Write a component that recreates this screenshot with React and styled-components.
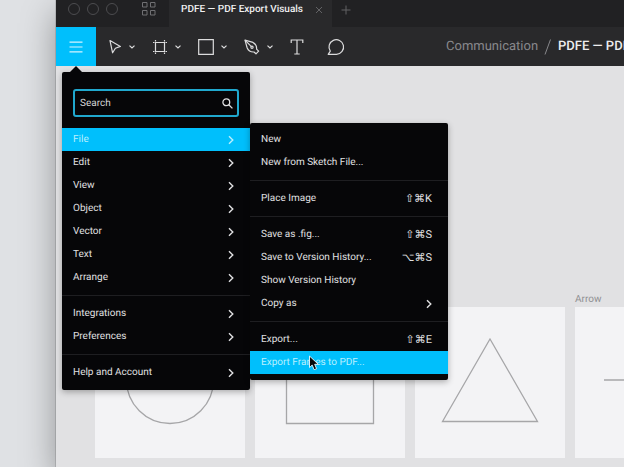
import { Fragment } from "react";
import styled, { createGlobalStyle } from "styled-components";

const MENU = [
  [
    { label: "File", active: true },
    { label: "Edit" },
    { label: "View" },
    { label: "Object" },
    { label: "Vector" },
    { label: "Text" },
    { label: "Arrange" },
  ],
  [{ label: "Integrations" }, { label: "Preferences" }],
  [{ label: "Help and Account" }],
];

const FILE_MENU = [
  [{ label: "New" }, { label: "New from Sketch File..." }],
  [{ label: "Place Image", keys: "⇧⌘K" }],
  [
    { label: "Save as .fig...", keys: "⇧⌘S" },
    { label: "Save to Version History...", keys: "⌥⌘S" },
    { label: "Show Version History" },
    { label: "Copy as", more: true },
  ],
  [
    { label: "Export...", keys: "⇧⌘E" },
    { label: "Export Frames to PDF...", active: true, pointer: true },
  ],
];

const ChevronRight = () => (
  <svg width="6" height="10" viewBox="0 0 6 10" fill="none" stroke="currentColor" strokeWidth="1.4">
    <path d="M1 1.2 4.8 5 1 8.8" />
  </svg>
);

const ChevronDown = () => (
  <svg width="6" height="4" viewBox="0 0 6 4" fill="none" stroke="currentColor" strokeWidth="1.3">
    <path d="M.5.6 3 3 5.5.6" />
  </svg>
);

const Pointer = () => (
  <PointerSvg width="12" height="17" viewBox="0 0 12 17">
    <path
      d="M1.5 1v11.6l2.7-2.5 1.9 4.6 2.5-1-1.9-4.4h3.6z"
      fill="#08080a"
      stroke="#d8eef6"
      strokeWidth="1"
      strokeLinejoin="round"
    />
  </PointerSvg>
);

const icons = {
  move: (
    <svg width="14" height="16" viewBox="0 0 14 16">
      <path d="M2 1.6 12.4 7.4 7.4 9.2 4.6 13.8z" strokeLinejoin="round" />
    </svg>
  ),
  frame: (
    <svg width="16" height="16" viewBox="0 0 16 16">
      <path d="M3.5 1v1.5M3.5 13.5V15M12.5 1v1.5M12.5 13.5V15M1 3.5h1.5M1 12.5h1.5M13.5 3.5H15M13.5 12.5H15" />
      <path d="M3.5 3.5h9v9h-9z" />
    </svg>
  ),
  shape: (
    <svg width="16" height="16" viewBox="0 0 16 16">
      <path d="M.7.7h14.6v14.6H.7z" />
    </svg>
  ),
  pen: (
    <svg width="16" height="16" viewBox="0 0 16 16">
      <path
        d="M1 1.2 9 3.4C11.8 5 12.8 7.4 12.6 10.2L14.6 12.2 12 14.8 10 13C6.8 13.2 4.4 11.8 3.2 9z"
        strokeLinejoin="round"
      />
      <path d="M1 1.2 7.4 7.6" />
      <circle cx="8" cy="8.2" r="1.1" />
    </svg>
  ),
  text: (
    <svg width="14" height="16" viewBox="0 0 14 16">
      <path d="M1.2 4V1h11.6v3M7 1v14M4.3 15h5.4" />
    </svg>
  ),
  comment: (
    <svg width="18" height="18" viewBox="0 0 18 18">
      <path d="M1.2 16.3 3.3 13.2A7.3 7.3 0 1 1 9.5 16.3z" strokeLinejoin="round" />
    </svg>
  ),
};

function MenuRows({ groups, nested }) {
  return groups.map((group, i) => (
    <Fragment key={i}>
      {i > 0 && <Separator />}
      {group.map((item) => (
        <MenuRow key={item.label} type="button" role="menuitem" $active={item.active}>
          <span>{item.label}</span>
          {item.keys && <Keys>{item.keys}</Keys>}
          {(item.more || !nested) && <ChevronRight />}
          {item.pointer && <Pointer />}
        </MenuRow>
      ))}
    </Fragment>
  ));
}

function MainMenu() {
  return (
    <Menu role="menu">
      <SearchBox>
        <input type="text" placeholder="Search" aria-label="Search" />
        <svg width="11" height="11" viewBox="0 0 11 11" fill="none" stroke="currentColor" strokeWidth="1.3">
          <circle cx="4.3" cy="4.3" r="3.4" />
          <path d="M6.8 6.8 10.4 10.4" />
        </svg>
      </SearchBox>
      <MenuRows groups={MENU} />
      <SubMenu role="menu">
        <MenuRows groups={FILE_MENU} nested />
      </SubMenu>
    </Menu>
  );
}

function App() {
  return (
    <>
      <GlobalStyle />
      <Desktop>
        <AppWindow>
          <TabBar>
            <Lights>
              <i />
              <i />
              <i />
            </Lights>
            <HomeButton type="button" aria-label="Files">
              <svg width="14" height="14" viewBox="0 0 14 14" fill="none" stroke="currentColor">
                <path d="M.5.5h4.5v4.5H.5zM8.5.5H13v4.5H8.5zM.5 8.5h4.5V13H.5zM8.5 8.5H13V13H8.5z" />
              </svg>
            </HomeButton>
            <Tab>
              <span>PDFE — PDF Export Visuals</span>
              <TabButton type="button" aria-label="Close tab">
                <svg width="8" height="8" viewBox="0 0 8 8" stroke="currentColor">
                  <path d="M1 1l6 6M7 1 1 7" />
                </svg>
              </TabButton>
            </Tab>
            <TabButton type="button" aria-label="New tab">
              <svg width="10" height="10" viewBox="0 0 10 10" stroke="currentColor">
                <path d="M5 .5v9M.5 5h9" />
              </svg>
            </TabButton>
          </TabBar>
          <Toolbar>
            <MenuAnchor>
              <MenuButton type="button" aria-label="Main menu">
                <svg width="14" height="12" viewBox="0 0 14 12" stroke="currentColor" strokeWidth="1.2">
                  <path d="M.5 1.2h13M.5 6h13M.5 10.8h13" />
                </svg>
              </MenuButton>
              <MainMenu />
            </MenuAnchor>
            <Tools>
              <Tool type="button" aria-label="Move">
                {icons.move}
                <ChevronDown />
              </Tool>
              <Tool type="button" aria-label="Frame">
                {icons.frame}
                <ChevronDown />
              </Tool>
              <Tool type="button" aria-label="Rectangle">
                {icons.shape}
                <ChevronDown />
              </Tool>
              <Tool type="button" aria-label="Pen">
                {icons.pen}
                <ChevronDown />
              </Tool>
            </Tools>
            <PlainTools>
              <Tool type="button" aria-label="Text">
                {icons.text}
              </Tool>
              <Tool type="button" aria-label="Comment">
                {icons.comment}
              </Tool>
            </PlainTools>
            <Breadcrumb>
              <a href="#communication">Communication</a>
              <svg width="8" height="16" viewBox="0 0 8 16" stroke="currentColor">
                <path d="M1 15.5 6.5.5" />
              </svg>
              <strong>PDFE — PDF Export Visuals</strong>
            </Breadcrumb>
          </Toolbar>
          <Canvas>
            <Frame>
              <Artboard>
                <circle cx="75" cy="73" r="43.5" />
              </Artboard>
            </Frame>
            <Frame>
              <Artboard>
                <path d="M31.5 29.5h87v87h-87z" />
              </Artboard>
            </Frame>
            <Frame>
              <Artboard>
                <path d="M75 32 122.5 114.5h-95z" />
              </Artboard>
            </Frame>
            <Frame>
              <FrameName>Arrow</FrameName>
              <Artboard>
                <path d="M29 73h92M115 67l6 6-6 6" />
              </Artboard>
            </Frame>
          </Canvas>
        </AppWindow>
      </Desktop>
    </>
  );
}

export default App;

const GlobalStyle = createGlobalStyle`
  * {
    box-sizing: border-box;
  }

  body {
    margin: 0;
    overflow: hidden;
    font-family: Roboto, "Liberation Sans", "DejaVu Sans", sans-serif;
    font-size: 10px;
    line-height: 15px;
    text-rendering: geometricPrecision;
  }

  button, input {
    margin: 0;
    padding: 0;
    border: 0;
    background: none;
    color: inherit;
    font: inherit;
    text-rendering: inherit;
  }

  svg {
    display: block;
    flex: none;
  }
`;

const Desktop = styled.div`
  display: flex;
  min-height: 100vh;
  padding-left: 56px;
  background: #dfe1e4;
`;

const AppWindow = styled.div`
  display: flex;
  flex-direction: column;
  flex: 1;
  min-width: 0;
  box-shadow: 0 0 0 1px rgba(0, 0, 0, 0.12), 0 12px 32px rgba(0, 0, 0, 0.35);
`;

const TabBar = styled.header`
  display: flex;
  height: 27px;
  background: #212123;
  color: #5c5c5f;
`;

const Lights = styled.div`
  display: flex;
  gap: 7px;
  padding: 3px 0 0 12px;

  i {
    width: 12px;
    height: 12px;
    border: 1px solid #4c4c4f;
    border-radius: 50%;
  }
`;

const HomeButton = styled.button`
  display: flex;
  margin: 2px 13px 0 24px;
  color: #707073;
`;

const Tab = styled.div`
  display: flex;
  gap: 12px;
  padding: 2px 9px 0 12px;
  background: #29292b;
  color: #f0f0f1;
  font-weight: 500;
  white-space: nowrap;
`;

const TabButton = styled.button`
  display: flex;
  align-items: center;
  height: 15px;
  color: #626265;

  ${TabBar} > & {
    margin: 2px 0 0 9px;
  }
`;

const Toolbar = styled.div`
  display: flex;
  height: 39px;
  background: #29292b;
  color: #dcdcdd;
`;

const MenuAnchor = styled.div`
  position: relative;
  z-index: 1;
  display: flex;

  /* little arrow that joins the menu to its button */
  &::after {
    content: "";
    position: absolute;
    top: 100%;
    left: 14px;
    border: 6px solid transparent;
    border-top: 0;
    border-bottom-color: #060608;
  }
`;

const MenuButton = styled.button`
  display: flex;
  align-items: center;
  justify-content: center;
  width: 40px;
  background: #00bffc;
  color: #d5f4fe;
`;

const Tools = styled.div`
  display: flex;
  align-items: center;
  gap: 17px;
  padding-left: 12px;
`;

const PlainTools = styled(Tools)`
  gap: 23px;
  padding-left: 17px;
`;

const Tool = styled.button`
  display: flex;
  align-items: center;
  gap: 7px;

  svg {
    fill: none;
    stroke: currentColor;
    stroke-width: 1.2;
  }
`;

const Breadcrumb = styled.nav`
  display: flex;
  align-items: center;
  gap: 6px;
  flex: 1;
  min-width: 0;
  padding-left: 101px;
  overflow: hidden;
  color: #88888b;
  font-size: 13px;
  white-space: nowrap;

  a {
    color: inherit;
    text-decoration: none;
  }

  strong {
    color: #ededee;
    font-weight: 500;
  }
`;

const Menu = styled.div`
  position: absolute;
  top: calc(100% + 6px);
  left: 6px;
  width: 188px;
  padding-bottom: 6px;
  border-radius: 2px;
  background: #060608;
  color: #e0e0e2;
  box-shadow: 0 2px 6px rgba(0, 0, 0, 0.3);
`;

const SubMenu = styled(Menu)`
  top: 51px;
  left: 100%;
  width: 198px;
  padding-top: 5px;
`;

const SearchBox = styled.label`
  display: flex;
  align-items: center;
  height: 28px;
  margin: 0 11px;
  padding: 0 4px 0 5px;
  border: 2px solid #20a8ce;
  border-radius: 3px;

  ${Menu} > & {
    position: relative;
    margin-top: 17px;
    margin-bottom: 11px;
  }

  input {
    flex: 1;
    min-width: 0;
    outline: 0;
  }

  input::placeholder {
    color: #d6d6d8;
    opacity: 1;
  }
`;

const MenuRow = styled.button`
  position: relative;
  display: flex;
  align-items: center;
  justify-content: space-between;
  width: 100%;
  height: 23px;
  padding: 0 16px 0 11px;
  background: ${({ $active }) => ($active ? "#00bffc" : "transparent")};
  color: ${({ $active }) => ($active ? "#b9effe" : "inherit")};
  text-align: left;
  white-space: nowrap;
`;

const Separator = styled.hr`
  height: 1px;
  margin: 6px 0;
  border: 0;
  background: #1e1e21;
`;

const Keys = styled.span`
  font-family: Roboto, "DejaVu Sans", sans-serif;
  font-size: 11px;
`;

const PointerSvg = styled.svg`
  position: absolute;
  top: 4px;
  left: 58px;
`;

const Canvas = styled.main`
  display: flex;
  align-items: flex-end;
  gap: 10px;
  flex: 1;
  padding: 0 0 9px 39px;
  overflow: hidden;
  background: #e1e1e3;
`;

const Frame = styled.figure`
  flex: none;
  margin: 0;
`;

const FrameName = styled.figcaption`
  color: #8f8f92;
`;

const Artboard = styled.svg.attrs({ viewBox: "0 0 150 151" })`
  width: 150px;
  height: 151px;
  background: #f3f3f5;
  fill: none;
  stroke: #a6a6a8;
  stroke-width: 1.3;
`;
